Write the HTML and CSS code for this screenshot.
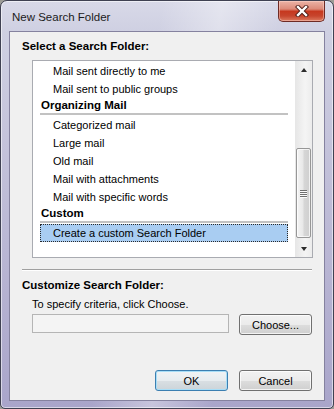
FILE: index.html
```html
<!DOCTYPE html>
<html>
<head>
<meta charset="utf-8">
<link rel="stylesheet" href="styles.css">
</head>
<body>
<div class="window">
  <div class="titlebar">
    <span class="title">New Search Folder</span>
    <div class="close">
      <svg width="14" height="12" viewBox="0 0 14 12">
        <path d="M3 2 L11 10 M11 2 L3 10" stroke="#4a1a14" stroke-width="4.2" stroke-linecap="square" fill="none"/>
        <path d="M3 2 L11 10 M11 2 L3 10" stroke="#ffffff" stroke-width="2.4" stroke-linecap="square" fill="none"/>
      </svg>
    </div>
  </div>
  <div class="client">
    <div class="label">Select a Search Folder:</div>
    <div class="listbox">
      <div class="list">
        <div class="item">Mail sent directly to me</div>
        <div class="item">Mail sent to public groups</div>
        <div class="group"><span>Organizing Mail</span><div class="group-line"></div></div>
        <div class="item">Categorized mail</div>
        <div class="item">Large mail</div>
        <div class="item">Old mail</div>
        <div class="item">Mail with attachments</div>
        <div class="item">Mail with specific words</div>
        <div class="group"><span>Custom</span><div class="group-line"></div></div>
        <div class="item selected">Create a custom Search Folder</div>
      </div>
      <div class="scrollbar">
        <div class="sb-btn"><span class="arrow-up"></span></div>
        <div class="sb-track">
          <div class="thumb"><span class="grip"></span><span class="grip"></span><span class="grip"></span><span class="grip"></span></div>
        </div>
        <div class="sb-btn"><span class="arrow-down"></span></div>
      </div>
    </div>
    <div class="sep"></div>
    <div class="label label2">Customize Search Folder:</div>
    <div class="hint">To specify criteria, click Choose.</div>
    <div class="criteria-row">
      <div class="textbox"></div>
      <div class="btn">Choose...</div>
    </div>
    <div class="actions">
      <div class="btn default">OK</div>
      <div class="btn">Cancel</div>
    </div>
  </div>
</div>
</body>
</html>
```

FILE: styles.css
```css
html, body {
  margin: 0;
  padding: 0;
}
body {
  background: #9c9c96;
  width: 334px;
  height: 409px;
  overflow: hidden;
  font-family: "Liberation Sans", Arial, sans-serif;
  font-size: 11px;
  color: #000;
}
.window {
  box-sizing: border-box;
  width: 334px;
  height: 409px;
  border: 1px solid #3f4152;
  border-radius: 7px 7px 5px 5px;
  background:
    linear-gradient(100deg, rgba(255,255,255,0) 40%, rgba(255,255,255,0.35) 55%, rgba(255,255,255,0) 70%),
    linear-gradient(to bottom, #d8d9e8 0px, #cfd0e2 30px, #bab7d4 60%, #a9a5ca 100%);
  box-shadow: inset 0 0 0 1px rgba(255,255,255,0.55);
  padding: 0 8px 7px 8px;
  display: flex;
  flex-direction: column;
}
.titlebar {
  height: 30px;
  display: flex;
  align-items: flex-start;
  justify-content: space-between;
}
.title {
  font-size: 11.5px;
  line-height: 14px;
  margin-top: 9px;
  padding-left: 3px;
  color: #1b1b1b;
}
.close {
  box-sizing: border-box;
  width: 47px;
  height: 21px;
  border: 1px solid #6e2a24;
  border-top: none;
  border-radius: 0 0 5px 5px;
  background: linear-gradient(to bottom, #ebb3a6 0%, #dc8a79 40%, #c6381f 52%, #c7452d 75%, #dc7a5f 100%);
  box-shadow: inset 0 0 0 1px rgba(255,220,210,0.45);
  display: flex;
  align-items: center;
  justify-content: center;
}
.close svg { display: block; }
.client {
  flex: 1;
  border: 1px solid #85829f;
  background: #f0f0f0;
  display: flex;
  flex-direction: column;
}
.label {
  font-weight: bold;
  font-size: 11.5px;
  line-height: 14px;
  padding: 7px 0 0 12px;
}
.listbox {
  box-sizing: border-box;
  height: 198px;
  margin: 7px 11px 0 22px;
  border: 1px solid #a9abb1;
  background: #fff;
  display: flex;
}
.list {
  flex: 1;
  padding: 1px 7px 0 7px;
  display: flex;
  flex-direction: column;
}
.item {
  height: 18px;
  line-height: 18px;
  padding-left: 13px;
  white-space: nowrap;
}
.item.selected {
  box-sizing: border-box;
  background: #a9cdf2;
  outline: 1px dotted #2a2a2a;
  outline-offset: -1px;
}
.group {
  height: 18px;
  display: flex;
  flex-direction: column;
}
.group span {
  font-weight: bold;
  font-size: 11.5px;
  line-height: 15px;
  padding-left: 1px;
}
.group-line {
  height: 2px;
  background: #c2c2c2;
}
.scrollbar {
  width: 17px;
  display: flex;
  flex-direction: column;
  background: linear-gradient(to right, #e6e6e6, #f4f4f4 60%, #ececec);
}
.sb-btn {
  height: 17px;
  display: flex;
  align-items: center;
  justify-content: center;
}
.arrow-up {
  width: 0; height: 0;
  border-left: 3.5px solid transparent;
  border-right: 3.5px solid transparent;
  border-bottom: 4px solid #2c2c2c;
}
.arrow-down {
  width: 0; height: 0;
  border-left: 3.5px solid transparent;
  border-right: 3.5px solid transparent;
  border-top: 4px solid #2c2c2c;
}
.sb-track {
  flex: 1;
  display: flex;
  flex-direction: column;
  align-items: center;
}
.thumb {
  box-sizing: border-box;
  width: 15px;
  height: 90px;
  margin-top: 70px;
  border: 1px solid #979797;
  border-radius: 2px;
  background: linear-gradient(to right, #f4f4f4, #e8e8e8 45%, #d6d6d6 55%, #cfcfcf);
  box-shadow: inset 0 0 0 1px rgba(255,255,255,0.7);
  display: flex;
  flex-direction: column;
  align-items: center;
  justify-content: center;
  gap: 1px;
}
.grip {
  width: 7px;
  height: 1px;
  background: #6f6f6f;
  box-shadow: 0 1px 0 #fafafa;
}
.sep {
  margin: 11px 12px 0 12px;
  border-top: 1px solid #a0a0a0;
  border-bottom: 1px solid #ffffff;
}
.label2 {
  padding-top: 7px;
}
.hint {
  line-height: 14px;
  padding: 5px 0 0 22px;
}
.criteria-row {
  display: flex;
  align-items: flex-start;
  gap: 10px;
  margin: 3px 12px 0 22px;
}
.textbox {
  box-sizing: border-box;
  width: 197px;
  height: 19px;
  border: 1px solid #b5b5b5;
  background: #f4f4f4;
}
.btn {
  box-sizing: border-box;
  width: 73px;
  height: 21px;
  border: 1px solid #707070;
  border-radius: 3px;
  background: linear-gradient(to bottom, #f2f2f2 0%, #ebebeb 50%, #dddddd 51%, #cfcfcf 100%);
  box-shadow: inset 0 0 0 1px rgba(255,255,255,0.75);
  display: flex;
  align-items: center;
  justify-content: center;
  line-height: 14px;
}
.btn.default {
  border-color: #3c7fb1;
  box-shadow: inset 0 0 0 1px #a8def7;
  background: linear-gradient(to bottom, #f0f3f5 0%, #e7ecef 50%, #d9dfe3 51%, #ccd4d9 100%);
}
.actions {
  display: flex;
  justify-content: flex-end;
  gap: 11px;
  margin-top: 35px;
  padding-right: 12px;
}
```
